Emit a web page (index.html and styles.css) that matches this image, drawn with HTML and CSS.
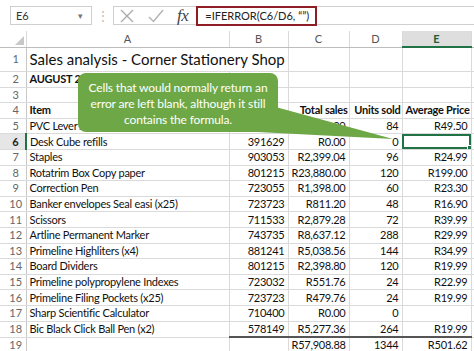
FILE: index.html
```html
<!DOCTYPE html>
<html lang="en">
<head>
  <meta charset="UTF-8" />
  <title>Sales analysis - IFERROR</title>
  <link rel="stylesheet" href="styles.css">
</head>
<body>
  <!-- Formula bar -->
  <div class="formula-bar">
    <div class="name-box"><span>E6</span><span class="drop">&#9662;</span></div>
    <div class="grip">&#8942;</div>
    <div class="fx-area">
      <svg class="icon" width="14" height="14" viewBox="0 0 14 14"><path d="M1 1 L13 13 M13 1 L1 13" stroke="#a8a8a8" stroke-width="1.3" fill="none"/></svg>
      <svg class="icon check" width="16" height="14" viewBox="0 0 16 14"><path d="M1 8 L5.5 12.5 L15 1" stroke="#b4b4b4" stroke-width="1.5" fill="none"/></svg>
      <span class="fx">fx</span>
      <span class="formula">=IFERROR(C6/D6, “”)</span>
    </div>
  </div>

  <!-- Sheet -->
  <table class="sheet">
    <colgroup>
      <col class="w-hd"><col class="w-a"><col class="w-b"><col class="w-c"><col class="w-d"><col class="w-e"><col class="w-f">
    </colgroup>
    <thead>
      <tr>
        <th class="corner"><span class="tri"></span></th>
        <th>A</th><th>B</th><th>C</th><th>D</th><th class="col-on">E</th><th></th>
      </tr>
    </thead>
    <tbody>
      <tr class="title-row"><td class="rh">1</td><td colspan="2" class="title">Sales analysis - Corner Stationery Shop</td><td></td><td></td><td></td><td></td></tr>
      <tr><td class="rh">2</td><td class="b">AUGUST 2015</td><td></td><td></td><td></td><td></td><td></td></tr>
      <tr><td class="rh">3</td><td></td><td></td><td></td><td></td><td></td><td></td></tr>
      <tr><td class="rh">4</td><td class="b">Item</td><td></td><td class="b hd">Total sales</td><td class="b hd">Units sold</td><td class="b hd">Average Price</td><td></td></tr>
      <tr><td class="rh">5</td><td>PVC Lever Arch File</td><td class="n">577539</td><td class="n">R4,158.00</td><td class="n">84</td><td class="n">R49.50</td><td></td></tr>
      <tr><td class="rh row-on">6</td><td>Desk Cube refills</td><td class="n">391629</td><td class="n">R0.00</td><td class="n">0</td><td class="n sel"><span class="handle"></span></td><td></td></tr>
      <tr><td class="rh">7</td><td>Staples</td><td class="n">903053</td><td class="n">R2,399.04</td><td class="n">96</td><td class="n">R24.99</td><td></td></tr>
      <tr><td class="rh">8</td><td>Rotatrim Box Copy paper</td><td class="n">801215</td><td class="n">R23,880.00</td><td class="n">120</td><td class="n">R199.00</td><td></td></tr>
      <tr><td class="rh">9</td><td>Correction Pen</td><td class="n">723055</td><td class="n">R1,398.00</td><td class="n">60</td><td class="n">R23.30</td><td></td></tr>
      <tr><td class="rh">10</td><td>Banker envelopes Seal easi (x25)</td><td class="n">723723</td><td class="n">R811.20</td><td class="n">48</td><td class="n">R16.90</td><td></td></tr>
      <tr><td class="rh">11</td><td>Scissors</td><td class="n">711533</td><td class="n">R2,879.28</td><td class="n">72</td><td class="n">R39.99</td><td></td></tr>
      <tr><td class="rh">12</td><td>Artline Permanent Marker</td><td class="n">743735</td><td class="n">R8,637.12</td><td class="n">288</td><td class="n">R29.99</td><td></td></tr>
      <tr><td class="rh">13</td><td>Primeline Highliters (x4)</td><td class="n">881241</td><td class="n">R5,038.56</td><td class="n">144</td><td class="n">R34.99</td><td></td></tr>
      <tr><td class="rh">14</td><td>Board Dividers</td><td class="n">801215</td><td class="n">R2,398.80</td><td class="n">120</td><td class="n">R19.99</td><td></td></tr>
      <tr><td class="rh">15</td><td>Primeline polypropylene Indexes</td><td class="n">723032</td><td class="n">R551.76</td><td class="n">24</td><td class="n">R22.99</td><td></td></tr>
      <tr><td class="rh">16</td><td>Primeline Filing Pockets (x25)</td><td class="n">723723</td><td class="n">R479.76</td><td class="n">24</td><td class="n">R19.99</td><td></td></tr>
      <tr><td class="rh">17</td><td>Sharp Scientific Calculator</td><td class="n">710400</td><td class="n">R0.00</td><td class="n">0</td><td class="n"></td><td></td></tr>
      <tr class="last-item"><td class="rh">18</td><td>Bic Black Click Ball Pen (x2)</td><td class="n">578149</td><td class="n">R5,277.36</td><td class="n">264</td><td class="n">R19.99</td><td></td></tr>
      <tr><td class="rh">19</td><td></td><td></td><td class="n tot">R57,908.88</td><td class="n tot">1344</td><td class="n tot">R501.62</td><td></td></tr>
    </tbody>
  </table>

  <!-- Callout over the sheet -->
  <svg class="pointer" width="474" height="351" viewBox="0 0 474 351"><polygon points="238,131 272,106 393,139" fill="#6ea846"/></svg>
  <div class="callout">Cells that would normally return an<br>error are left blank, although it still<br>contains the formula.</div>
</body>
</html>
```

FILE: styles.css
```css
body {
  margin: 0;
  background: #fff;
  font-family: Lato, 'Liberation Sans', sans-serif;
  color: #111;
  overflow: hidden;
  width: 474px;
  height: 351px;
  position: relative;
}

/* formula bar */
.formula-bar {
  display: flex;
  align-items: center;
  height: 31px;
  padding-left: 10px;
  box-sizing: border-box;
}
.name-box {
  width: 82px;
  height: 19px;
  box-sizing: border-box;
  border: 1px solid #cfcfcf;
  display: flex;
  align-items: center;
  justify-content: space-between;
  padding: 0 8px 0 5px;
  font-size: 11px;
  color: #333;
}
.name-box .drop {
  font-size: 9px;
  color: #777;
}
.grip {
  width: 21px;
  text-align: center;
  color: #bbb;
  font-size: 12px;
}
.fx-area {
  flex: 1;
  height: 19px;
  box-sizing: border-box;
  border: 1px solid #cfcfcf;
  border-right: none;
  display: flex;
  align-items: center;
  padding-left: 6px;
}
.icon { margin-right: 14px; }
.icon.check { margin-right: 13px; }
.fx {
  font-family: 'Liberation Serif', serif;
  font-style: italic;
  font-size: 17px;
  color: #444;
  margin-right: 8px;
  letter-spacing: -0.5px;
}
.formula {
  border: 2px solid #8f1d26;
  height: 20px;
  box-sizing: border-box;
  width: 121px;
  display: flex;
  align-items: center;
  padding-left: 7px;
  font-size: 11px;
  color: #222;
}

/* sheet */
.sheet {
  border-collapse: collapse;
  table-layout: fixed;
  width: 511px;
  font-size: 11px;
  letter-spacing: -0.25px;
}
.w-hd { width: 26px; }
.w-a { width: 203px; }
.w-b { width: 59px; }
.w-c { width: 61px; }
.w-d { width: 53px; }
.w-e { width: 69px; }
.w-f { width: 40px; }

.sheet th {
  height: 15px;
  padding: 0;
  font-weight: normal;
  font-size: 11px;
  letter-spacing: 0;
  color: #555;
  border-right: 1px solid #d9d9d9;
  border-bottom: 1px solid #bdbdbd;
}
.sheet th.corner {
  position: relative;
}
.tri {
  position: absolute;
  right: 2px;
  bottom: 2px;
  width: 0;
  height: 0;
  border-left: 9px solid transparent;
  border-bottom: 9px solid #c8c8c8;
}
.sheet th.col-on {
  background: #dedede;
  border-bottom: 2px solid #217346;
  color: #1f5e36;
  font-weight: bold;
}

.sheet td {
  height: 14.6px;
  padding: 0 3px;
  border-right: 1px solid #dadada;
  border-bottom: 1px solid #dadada;
  white-space: nowrap;
  overflow: hidden;
  line-height: 14px;
}
.sheet td.rh {
  padding: 0 0 0 6px;
  text-align: center;
  color: #666;
  font-size: 11px;
  letter-spacing: 0;
  border-right-color: #c8c8c8;
}
.sheet td.row-on {
  color: #222;
  font-weight: bold;
  background: #e6e6e6;
  border-right: 2px solid #217346;
}
.title-row td { height: 23px; }
.sheet td.title {
  font-size: 15px;
  letter-spacing: 0;
  overflow: visible;
}
.b { font-weight: bold; }
.sheet td.hd {
  text-align: right;
  padding: 0 1px;
}
.n { text-align: right; }
.sel {
  position: relative;
  outline: 2px solid #217346;
  outline-offset: -2px;
}
.handle {
  position: absolute;
  right: -3px;
  bottom: -3px;
  width: 5px;
  height: 5px;
  background: #217346;
  border: 1px solid #fff;
}
.last-item td.n { border-bottom: 2px solid #555; }

/* callout */
.pointer {
  position: absolute;
  left: 0;
  top: 0;
  pointer-events: none;
}
.callout {
  position: absolute;
  left: 78px;
  top: 73px;
  width: 200px;
  height: 59px;
  box-sizing: border-box;
  padding: 7px 0 0;
  background: #6ea846;
  border-radius: 8px;
  color: #fff;
  font-size: 12px;
  letter-spacing: -0.15px;
  line-height: 16px;
  text-align: center;
  white-space: nowrap;
}
```
